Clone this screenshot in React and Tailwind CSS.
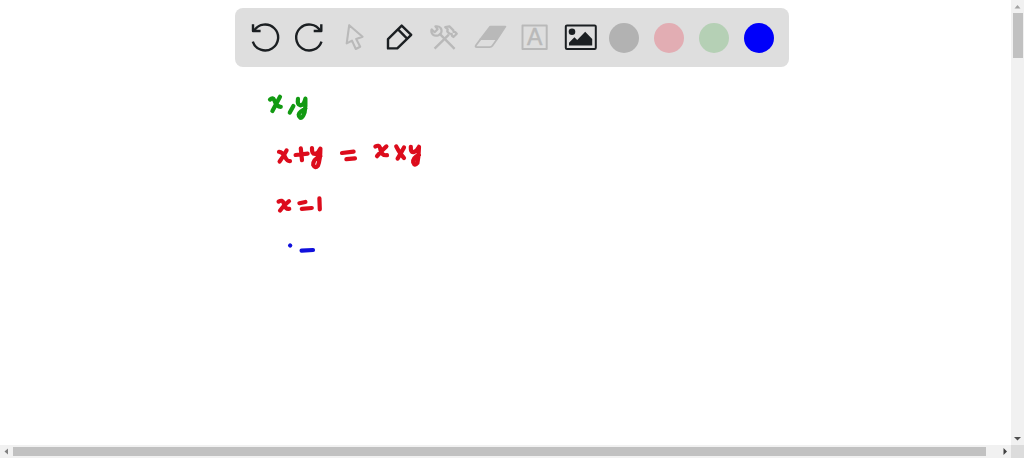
const tools = [
  {
    label: 'Undo',
    color: 'text-[#1b1f22]',
    art: (
      <g strokeWidth="2.4">
        <path d="M10.8 33.6A13 13 0 1 0 12 22.8" />
        <path d="M11 16.3V23H18.6" />
      </g>
    ),
  },
  {
    label: 'Redo',
    color: 'text-[#1b1f22]',
    art: (
      <g strokeWidth="2.4">
        <path d="M34.5 33.6A13 13 0 1 1 33.3 22.8" />
        <path d="M34.3 16.3V23H26.7" />
      </g>
    ),
  },
  {
    label: 'Select',
    color: 'text-[#b9b9b9]',
    art: <path strokeWidth="2.1" d="M17.2 17.2L14.7 35.4L20 32.6L23.8 41L28.2 38.8L24.2 31L30.6 28.7Z" />,
  },
  {
    label: 'Pen',
    color: 'text-[#1b1f22]',
    art: (
      <g strokeWidth="2.4">
        <path d="M11 40.4V31.1L24.7 17.6L34.2 26.8L20.3 40.4Z" />
        <path d="M21 21.4L30.4 30.8" />
      </g>
    ),
  },
  {
    label: 'Tools',
    color: 'text-[#b9b9b9]',
    art: (
      <g strokeWidth="2.2">
        <path d="M9.6 21.4C8.4 25.6 12 29 16.6 27.2L19.2 24.8C20.6 20.8 17.6 17.6 13.4 18.4L15.6 21.2L12.6 24.2Z" />
        <path strokeWidth="2.4" d="M18 26.2L32.6 40.8M12.6 40.6L26.8 26.6" />
        <path d="M23.2 19.2L27.4 18.4L31.4 22.4L31.6 24L33.4 24.2L34.8 25.8L31.4 29L29.8 27.6V26L27.4 25.6L25.2 23.4L25.8 21.4Z" />
      </g>
    ),
  },
  {
    label: 'Eraser',
    color: 'text-[#b9b9b9]',
    art: (
      <g strokeWidth="1.8">
        <path d="M13.6 31.1L23.2 18.6H38.4L30.2 31.1Z" fill="currentColor" />
        <path d="M13.6 31.1L9 37.2Q7.8 39.2 9.8 39.2H22.6Q24.4 39.2 25.4 37.8L30.2 31.1" />
      </g>
    ),
  },
  {
    label: 'Text',
    color: 'text-[#b9b9b9]',
    art: (
      <>
        <rect x="10.5" y="17.5" width="24.2" height="23.6" strokeWidth="2" />
        <text
          x="22.6"
          y="37.4"
          textAnchor="middle"
          fontSize="23"
          fontFamily="'Liberation Sans', sans-serif"
          fill="currentColor"
          strokeWidth="0.5"
        >
          A
        </text>
      </>
    ),
  },
  {
    label: 'Image',
    color: 'text-[#1b1f22]',
    art: (
      <>
        <rect x="8.8" y="17.4" width="30" height="23.6" rx="1.2" strokeWidth="2" />
        <circle cx="15" cy="23.8" r="3.3" fill="currentColor" stroke="none" />
        <path
          d="M12 37.4V34.8L17.4 29.2L20.2 32L28.2 23.8L35.2 31V37.4Z"
          fill="currentColor"
          stroke="none"
        />
      </>
    ),
  },
];

const swatches = [
  { label: 'Gray', bg: 'bg-[#b2b2b2]' },
  { label: 'Pink', bg: 'bg-[#e2adb3]' },
  { label: 'Light green', bg: 'bg-[#b5d0b5]' },
  { label: 'Blue', bg: 'bg-[#0000fa]' },
];

function Toolbar() {
  return (
    <div role="toolbar" aria-label="Whiteboard tools" className="flex rounded-lg bg-[#dedede] px-[7px]">
      {tools.map((tool) => (
        <button key={tool.label} type="button" aria-label={tool.label} className={tool.color}>
          <svg
            className="h-[59px] w-[45px]"
            viewBox="0 0 45 59"
            fill="none"
            stroke="currentColor"
            strokeLinejoin="round"
            aria-hidden="true"
          >
            {tool.art}
          </svg>
        </button>
      ))}
      {swatches.map((swatch) => (
        <button
          key={swatch.label}
          type="button"
          aria-label={swatch.label}
          className="flex w-[45px] items-center pl-[7px]"
        >
          <span className={`size-[30px] rounded-full ${swatch.bg}`} />
        </button>
      ))}
    </div>
  );
}

function Ink() {
  return (
    <svg
      className="h-[180px] w-[180px]"
      viewBox="0 0 180 180"
      fill="none"
      strokeWidth="4.2"
      strokeLinecap="round"
      strokeLinejoin="round"
      role="img"
      aria-label="Handwritten notes"
    >
      <g stroke="#129a12">
        <path d="M10 13.6Q13 10.8 14.4 14.4Q16.4 20.8 20.8 20.8M20 10.8L12.4 25" />
        <path d="M33.4 20L29.8 26.6" />
        <path d="M38 12.8Q37 19 40.4 19.4Q44 19 45.4 12.6Q45.8 20 44.6 26.4Q42.6 32.4 40.4 31.8Q36.6 28.8 41 25.4L45.4 22.4" />
      </g>
      <g stroke="#dc0c1c">
        <path d="M19 65.8Q22.6 66.4 24.6 70Q27 75.4 30 75.2M26.6 64.4Q23.4 70.6 19.6 75.6" />
        <path d="M35.6 69L47.6 67.6M40.8 62.4L42 74.2" />
        <path d="M52 62Q51.6 68 55 68Q58.6 67 60.4 62.6Q60.4 73 58 79.6Q55 83 53.2 79Q52.6 73.6 60.4 69.8" />
        <path d="M82 67L93.6 65.6M86.4 73.2L95 72.4" />
        <path d="M115.4 60.6Q118.8 58.4 120 61.8Q121 70 127 69.2M126.4 60.4Q121.6 64.6 117 70.2" />
        <path d="M136.2 60.4Q140 68 144 72M144 61.4Q140.6 67.6 137.6 72.6" />
        <path d="M150.8 60.8Q150.6 66.6 153.4 66.2Q157 65 159 60.8Q158.8 70 157.4 77Q154.6 80.6 153.2 76.4Q152.8 71.6 159 69" />
        <path d="M18.6 115.6Q22.4 113.4 23.6 117Q25.6 124 29.2 122.8M29 115.2Q23.6 119.4 20 124.6" />
        <path d="M39.4 117.2L45.4 116M41.8 122.8L51.8 122M59.4 112.4L59.8 123.4" />
      </g>
      <g stroke="#1010dc">
        <path d="M30.1 159.4L30.2 159.5M41.6 164.6L53 164" />
      </g>
    </svg>
  );
}

function Arrow({ d, className }) {
  return (
    <svg viewBox="0 0 13 13" className={`size-[13px] shrink-0 ${className}`} fill="currentColor" aria-hidden="true">
      <path d={d} />
    </svg>
  );
}

export default function App() {
  return (
    <div className="grid h-screen grid-cols-[1fr_13px] grid-rows-[1fr_13px] bg-white">
      <main className="min-w-0 overflow-hidden">
        <header className="flex justify-center pt-2 pl-[13px]">
          <Toolbar />
        </header>
        <section aria-label="Canvas" className="pt-[19px] pl-[260px]">
          <Ink />
        </section>
      </main>
      <div className="flex flex-col items-center bg-[#f1f1f1]">
        <Arrow className="text-[#a3a3a3]" d="M6.5 5L9.5 8.5H3.5Z" />
        <div className="h-[45px] w-[10px] bg-[#c1c1c1]" />
        <Arrow className="mt-auto text-[#505050]" d="M6.5 8.5L10 5H3Z" />
      </div>
      <div className="flex items-center bg-[#f1f1f1]">
        <Arrow className="text-[#808080]" d="M4.5 6.5L8 3.5V9.5Z" />
        <div className="mr-3 h-[9px] flex-1 bg-[#c1c1c1]" />
        <Arrow className="text-[#404040]" d="M9 6.5L5.5 3V10Z" />
      </div>
      <div className="bg-[#dcdcdc]" />
    </div>
  );
}
